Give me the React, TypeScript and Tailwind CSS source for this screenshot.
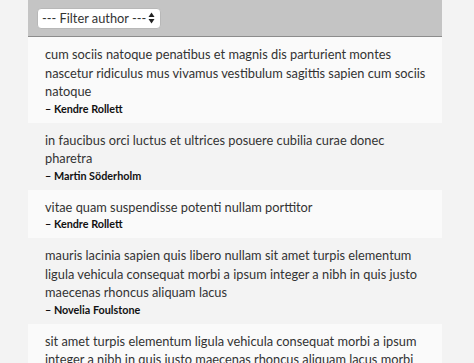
import React from "react";

const quotes = [
  {
    text: "cum sociis natoque penatibus et magnis dis parturient montes nascetur ridiculus mus vivamus vestibulum sagittis sapien cum sociis natoque",
    author: "Kendre Rollett",
  },
  {
    text: "in faucibus orci luctus et ultrices posuere cubilia curae donec pharetra",
    author: "Martin Söderholm",
  },
  {
    text: "vitae quam suspendisse potenti nullam porttitor",
    author: "Kendre Rollett",
  },
  {
    text: "mauris lacinia sapien quis libero nullam sit amet turpis elementum ligula vehicula consequat morbi a ipsum integer a nibh in quis justo maecenas rhoncus aliquam lacus",
    author: "Novelia Foulstone",
  },
  {
    text: "sit amet turpis elementum ligula vehicula consequat morbi a ipsum integer a nibh in quis justo maecenas rhoncus aliquam lacus morbi quis tortor id nulla ultrices aliquet",
    author: "Martin Söderholm",
  },
];

export default function App() {
  return (
    <div className="min-h-screen bg-[#f3f3f3] text-[#333] font-['Lato','Open_Sans',sans-serif]">
      <div className="ml-[28px] w-[414px]">
        <div className="h-[37px] bg-[#c4c4c4] border-b border-[#8c8c8c] px-[9px] flex items-center">
          <div className="h-[21px] w-[124px] bg-white border border-[#b8b8b8] rounded-[4px] flex items-center pl-[4px] pr-[5px] justify-between">
            <span className="text-[12.8px] leading-none text-[#333] whitespace-nowrap">--- Filter author ---</span>
            <svg width="7" height="12" viewBox="0 0 7 12" className="shrink-0">
              <path d="M3.5 0.5 L6.5 5 L0.5 5 Z" fill="#222" />
              <path d="M3.5 11.5 L6.5 7 L0.5 7 Z" fill="#222" />
            </svg>
          </div>
        </div>
        {quotes.map((q, i) => (
          <div
            key={i}
            className={
              (i % 2 === 0 ? "bg-[#fafafa] " : "bg-[#f3f3f3] ") +
              "pl-[17px] pr-[14px] pt-[8px] pb-[7px]"
            }
          >
            <div className="text-[12.8px] leading-[18.5px] text-[#333]">{q.text}</div>
            <div className="text-[10.8px] leading-[15px] font-bold text-[#111]">– {q.author}</div>
          </div>
        ))}
      </div>
    </div>
  );
}
